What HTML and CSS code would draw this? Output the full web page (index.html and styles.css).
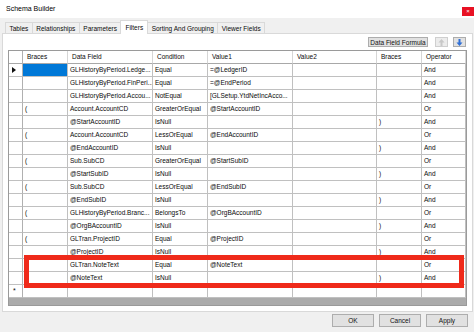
FILE: index.html
```html
<!DOCTYPE html>
<html>
<head>
<meta charset="utf-8">
<title>Schema Builder</title>
<link rel="stylesheet" href="styles.css">
</head>
<body>
<div class="titlebar">
  <span class="title">Schema Builder</span>
  <span class="close">×</span>
</div>
<div class="tabs">
  <div class="tab">Tables</div>
  <div class="tab">Relationships</div>
  <div class="tab">Parameters</div>
  <div class="tab active">Filters</div>
  <div class="tab">Sorting And Grouping</div>
  <div class="tab">Viewer Fields</div>
</div>
<div class="page">
  <div class="toolbar">
    <button class="btn formula">Data Field Formula</button>
    <button class="btn icon disabled"><svg width="7" height="7" viewBox="0 0 7 7"><path d="M2.5 7h2V3.5h2L3.5 0 0.5 3.5h2z" fill="#c8c8c8"/></svg></button>
    <button class="btn icon"><svg width="7" height="7" viewBox="0 0 7 7"><path d="M2.5 0h2v3.5h2L3.5 7 0.5 3.5h2z" fill="#2f6fd6"/></svg></button>
  </div>
  <div class="grid">
    <table>
      <colgroup>
        <col class="c-rh"><col class="c-br"><col class="c-df"><col class="c-co"><col class="c-v1"><col class="c-v2"><col class="c-br"><col class="c-op">
      </colgroup>
      <thead>
        <tr><th class="rh"></th><th>Braces</th><th>Data Field</th><th>Condition</th><th>Value1</th><th>Value2</th><th>Braces</th><th>Operator</th></tr>
      </thead>
      <tbody>
        <tr><td class="rh"><svg width="4" height="6" viewBox="0 0 4 6"><path d="M0 0L4 3 0 6z" fill="#111"/></svg></td><td class="sel"></td><td>GLHistoryByPeriod.Ledge...</td><td>Equal</td><td>=@LedgerID</td><td></td><td></td><td>And</td></tr>
        <tr><td class="rh"></td><td></td><td>GLHistoryByPeriod.FinPeri...</td><td>Equal</td><td>=@EndPeriod</td><td></td><td></td><td>And</td></tr>
        <tr><td class="rh"></td><td></td><td>GLHistoryByPeriod.Accou...</td><td>NotEqual</td><td>[GLSetup.YtdNetIncAcco...</td><td></td><td></td><td>And</td></tr>
        <tr><td class="rh"></td><td>(</td><td>Account.AccountCD</td><td>GreaterOrEqual</td><td>@StartAccountID</td><td></td><td></td><td>Or</td></tr>
        <tr><td class="rh"></td><td></td><td>@StartAccountID</td><td>IsNull</td><td></td><td></td><td>)</td><td>And</td></tr>
        <tr><td class="rh"></td><td>(</td><td>Account.AccountCD</td><td>LessOrEqual</td><td>@EndAccountID</td><td></td><td></td><td>Or</td></tr>
        <tr><td class="rh"></td><td></td><td>@EndAccountID</td><td>IsNull</td><td></td><td></td><td>)</td><td>And</td></tr>
        <tr><td class="rh"></td><td>(</td><td>Sub.SubCD</td><td>GreaterOrEqual</td><td>@StartSubID</td><td></td><td></td><td>Or</td></tr>
        <tr><td class="rh"></td><td></td><td>@StartSubID</td><td>IsNull</td><td></td><td></td><td>)</td><td>And</td></tr>
        <tr><td class="rh"></td><td>(</td><td>Sub.SubCD</td><td>LessOrEqual</td><td>@EndSubID</td><td></td><td></td><td>Or</td></tr>
        <tr><td class="rh"></td><td></td><td>@EndSubID</td><td>IsNull</td><td></td><td></td><td>)</td><td>And</td></tr>
        <tr><td class="rh"></td><td>(</td><td>GLHistoryByPeriod.Branc...</td><td>BelongsTo</td><td>@OrgBAccountID</td><td></td><td></td><td>Or</td></tr>
        <tr><td class="rh"></td><td></td><td>@OrgBAccountID</td><td>IsNull</td><td></td><td></td><td>)</td><td>And</td></tr>
        <tr><td class="rh"></td><td>(</td><td>GLTran.ProjectID</td><td>Equal</td><td>@ProjectID</td><td></td><td></td><td>Or</td></tr>
        <tr><td class="rh"></td><td></td><td>@ProjectID</td><td>IsNull</td><td></td><td></td><td>)</td><td>And</td></tr>
        <tr><td class="rh"></td><td></td><td>GLTran.NoteText</td><td>Equal</td><td>@NoteText</td><td></td><td></td><td>Or</td></tr>
        <tr><td class="rh"></td><td></td><td>@NoteText</td><td>IsNull</td><td></td><td></td><td>)</td><td>And</td></tr>
        <tr><td class="rh star">*</td><td></td><td></td><td></td><td></td><td></td><td></td><td></td></tr>
      </tbody>
    </table>
    <div class="highlight"></div>
  </div>
</div>
<div class="footer">
  <button class="btn action">OK</button>
  <button class="btn action">Cancel</button>
  <button class="btn action">Apply</button>
</div>
</body>
</html>
```
FILE: styles.css
```css
* { box-sizing: border-box; }
html, body { margin: 0; padding: 0; }
body {
  width: 474px;
  height: 332px;
  overflow: hidden;
  background: #f0f0f0;
  font-family: "Liberation Sans", Arial, sans-serif;
  font-size: 6.5px;
  color: #0a0a0a;
}
.titlebar {
  height: 18px;
  background: #fff;
  display: flex;
  align-items: center;
  padding: 0 0 2px 6px;
  font-size: 7px;
  color: #000;
}
.close {
  margin-left: auto;
  align-self: flex-start;
  margin-top: 7px;
  width: 12px;
  height: 9px;
  background: #e81123;
  color: #fff;
  font-size: 6px;
  line-height: 9px;
  text-align: center;
}
.tabs {
  height: 15px;
  display: flex;
  align-items: flex-end;
  padding-left: 5px;
}
.tab {
  height: 11px;
  padding: 0 3.5px;
  border: 1px solid #d9d9d9;
  border-bottom: none;
  margin-right: -1px;
  background: #f0f0f0;
  display: flex;
  align-items: center;
  white-space: nowrap;
}
.tab.active {
  height: 14px;
  margin-bottom: -1px;
  padding: 0 4px 1px;
  background: #fff;
  position: relative;
  z-index: 1;
}
.page {
  height: 279px;
  margin: 0 1px 0 2px;
  background: #fff;
  border: 1px solid #d9d9d9;
  padding: 0 5px;
}
.toolbar {
  height: 16px;
  display: flex;
  justify-content: flex-end;
  align-items: flex-start;
  padding: 3px 1px 0 0;
}
.btn {
  font-family: inherit;
  font-size: 6.5px;
  color: #111;
  background: #e1e1e1;
  border: 1px solid #adadad;
  padding: 0;
  margin: 0;
  display: flex;
  align-items: center;
  justify-content: center;
}
.formula { width: 60px; height: 10px; }
.icon { width: 13px; height: 10px; margin-left: 7px; }
.icon + .icon { margin-left: 5px; }
.icon.disabled { background: #ececec; border-color: #cfcfcf; }
.grid {
  position: relative;
  height: 256px;
  border: 1px solid #9a9a9a;
  background: #ababab;
}
table {
  border-collapse: separate;
  border-spacing: 0;
  table-layout: fixed;
  width: 457px;
}
.c-rh { width: 14px; }
.c-br { width: 45px; }
.c-df { width: 85px; }
.c-co { width: 55px; }
.c-v1 { width: 85px; }
.c-v2 { width: 84px; }
.c-op { width: 44px; }
th, td {
  height: 13px;
  padding: 0 1px 0 2px;
  border-right: 1px solid #c0c0c0;
  border-bottom: 1px solid #c0c0c0;
  background: #fff;
  white-space: nowrap;
  overflow: hidden;
  text-align: left;
  font-weight: normal;
  line-height: 12px;
  vertical-align: middle;
}
th { padding-left: 4px; border-bottom-color: #a8a8a8; border-right-color: #d6d6d6; }
td.rh, th.rh { padding: 0; text-align: center; border-right-color: #b0b0b0; }
td.rh svg { display: block; margin: 0 0 0 3px; }
td.star { font-size: 7px; text-align: left; padding-left: 4px; }
td.sel { background: #0078d7; }
.highlight {
  position: absolute;
  left: 15px;
  top: 204px;
  width: 440px;
  height: 33px;
  border: 5px solid #ef2a1a;
}
.footer {
  height: 20px;
  display: flex;
  justify-content: flex-end;
  align-items: flex-start;
  padding: 2px 6px 0 0;
  gap: 5px;
}
.action { width: 42px; height: 13px; }
```
